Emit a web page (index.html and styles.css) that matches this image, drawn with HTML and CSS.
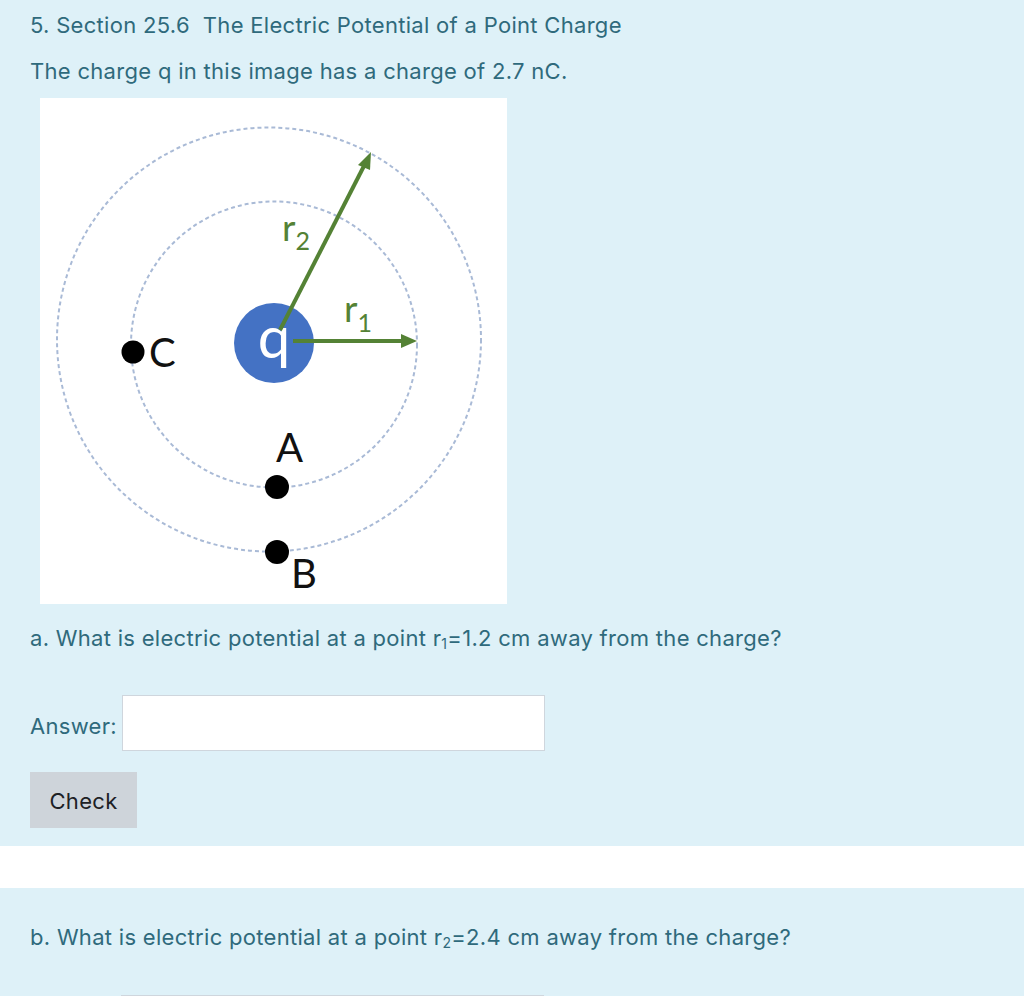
FILE: index.html
```html
<!DOCTYPE html>
<html>
<head>
<meta charset="utf-8">
<link rel="stylesheet" href="styles.css">
</head>
<body>
<div class="formulation first">
  <p class="title">5. Section 25.6&nbsp; The Electric Potential of a Point Charge</p>
  <p class="line">The charge q in this image has a charge of 2.7 nC.</p>
  <div class="figure">
    <svg width="467" height="506" viewBox="0 0 467 506" xmlns="http://www.w3.org/2000/svg">
      <rect x="0" y="0" width="467" height="506" fill="#ffffff"/>
      <circle cx="229" cy="241.5" r="212" fill="none" stroke="#a9bad6" stroke-width="2" stroke-dasharray="4 3"/>
      <circle cx="234" cy="246.5" r="143" fill="none" stroke="#a9bad6" stroke-width="2" stroke-dasharray="4 3"/>
      <circle cx="234" cy="245" r="40" fill="#4472c4"/>
      <text x="234" y="260" class="q" text-anchor="middle">q</text>
      <line x1="240" y1="232" x2="325" y2="66" stroke="#548235" stroke-width="4"/>
      <polygon points="331,54 318,67 330,72" fill="#548235"/>
      <line x1="253" y1="243" x2="364" y2="243" stroke="#548235" stroke-width="4"/>
      <polygon points="377,243 361,236 361,250" fill="#548235"/>
      <text x="242" y="143" class="lbl green">r<tspan class="sub" dy="9">2</tspan></text>
      <text x="304" y="224" class="lbl green">r<tspan class="sub" dy="10">1</tspan></text>
      <circle cx="93" cy="254" r="11.5" fill="#000"/>
      <text x="109" y="269" class="lbl">C</text>
      <text x="236" y="364" class="lbl">A</text>
      <circle cx="237" cy="389" r="12" fill="#000"/>
      <circle cx="237" cy="454" r="12" fill="#000"/>
      <text x="251" y="490" class="lbl">B</text>
    </svg>
  </div>
  <p class="question">a. What is electric potential at a point r<sub>1</sub>=1.2 cm away from the charge?</p>
  <div class="answer">
    <label class="answer-label">Answer:</label>
    <div class="answer-box"></div>
  </div>
  <div class="check">Check</div>
</div>
<div class="gap"></div>
<div class="formulation second">
  <p class="question">b. What is electric potential at a point r<sub>2</sub>=2.4 cm away from the charge?</p>
  <div class="answer-box second-box"></div>
</div>
</body>
</html>
```
FILE: styles.css
```css
html, body {
  margin: 0;
  padding: 0;
  background: #ffffff;
}
body {
  font-family: Inter, "Liberation Sans", Arial, sans-serif;
  color: #2f6a7c;
  font-size: 22px;
  letter-spacing: 0.3px;
  overflow: hidden;
}
.formulation {
  background: #def1f8;
  padding: 0 30px;
}
.first {
  padding-top: 11px;
  padding-bottom: 18px;
}
.title, .line, .question {
  margin: 0;
  line-height: 28px;
}
.line {
  margin-top: 18px;
}
.figure {
  margin-top: 13px;
  margin-left: 10px;
  width: 467px;
  height: 506px;
}
.figure svg {
  display: block;
}
.figure .q {
  font-family: Lato, "Open Sans", sans-serif;
  font-size: 58px;
  fill: #ffffff;
  letter-spacing: 0;
}
.figure .lbl {
  font-family: Lato, "Open Sans", sans-serif;
  font-size: 40px;
  fill: #111111;
  letter-spacing: 0;
}
.figure .green {
  fill: #548235;
  font-size: 37px;
}
.figure .sub {
  font-size: 25px;
}
.question {
  margin-top: 20px;
}
.question sub {
  font-size: 14px;
  line-height: 0;
  vertical-align: -3px;
}
.answer {
  display: flex;
  align-items: center;
  margin-top: 43px;
}
.answer-label {
  width: 92px;
  padding-top: 5px;
}
.answer-box {
  width: 421px;
  height: 54px;
  background: #ffffff;
  border: 1px solid #cfd6dd;
}
.check {
  margin-top: 21px;
  width: 107px;
  height: 56px;
  line-height: 58px;
  text-align: center;
  background: #ced4da;
  color: #1d2125;
}
.gap {
  height: 42px;
}
.second {
  box-sizing: border-box;
  height: 108px;
  padding-top: 15px;
  overflow: hidden;
}
.second-box {
  margin-top: 44px;
  margin-left: 91px;
}
```
